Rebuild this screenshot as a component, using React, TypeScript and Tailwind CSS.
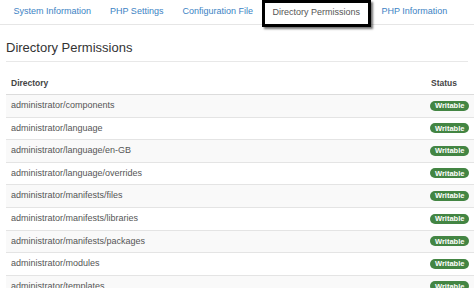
const rows = [
  "administrator/components",
  "administrator/language",
  "administrator/language/en-GB",
  "administrator/language/overrides",
  "administrator/manifests/files",
  "administrator/manifests/libraries",
  "administrator/manifests/packages",
  "administrator/modules",
  "administrator/templates",
];

const tabs = ["System Information", "PHP Settings", "Configuration File", "Directory Permissions", "PHP Information"];

export default function App() {
  return (
    <div className="h-[288px] w-[474px] overflow-hidden bg-white font-['Liberation_Sans',Arial,sans-serif] text-[#555]">
      {/* Tabs */}
      <div className="flex h-[25px] items-start whitespace-nowrap border-b border-[#e6e6e6] pl-[4px]">
        {tabs.map((t) =>
          t === "Directory Permissions" ? (
            <div
              key={t}
              className="relative z-10 mr-[1px] flex h-[27px] items-center border-[3px] border-black bg-white pl-[7px] pr-[8px] pb-[2px] text-[9px] text-[#555] shadow-[2px_2px_2px_rgba(0,0,0,0.55)]"
            >
              {t}
            </div>
          ) : (
            <div key={t} className="flex h-[25px] items-center px-[9.5px] pb-[1px] text-[9px] text-[#3c83c4]">
              {t}
            </div>
          )
        )}
      </div>

      {/* Heading */}
      <div className="mx-[6px] mt-[15px] border-b border-[#e8e8e8] pb-[5px] text-[13px] leading-[16px] text-[#333]">
        Directory Permissions
      </div>

      {/* Table */}
      <div className="ml-[6px] mt-[11px]">
        <div className="flex h-[22px] items-center border-b border-[#dcdcdc] pl-[5px] text-[8.5px] font-bold text-[#444]">
          <div className="flex-1">Directory</div>
          <div className="w-[44px] pl-[1px]">Status</div>
        </div>
        {rows.map((r, i) => (
          <div
            key={r}
            className={`flex h-[22.6px] items-center border-b border-[#e4e4e4] pl-[5px] text-[9px] ${i % 2 === 0 ? "bg-[#f9f9f9]" : "bg-white"}`}
          >
            <div className="flex-1">{r}</div>
            <div className="w-[44px]">
              <span className="inline-flex h-[10px] items-center rounded-full bg-[#438543] px-[5px] text-[7.5px] font-bold text-white">
                Writable
              </span>
            </div>
          </div>
        ))}
      </div>
    </div>
  );
}
